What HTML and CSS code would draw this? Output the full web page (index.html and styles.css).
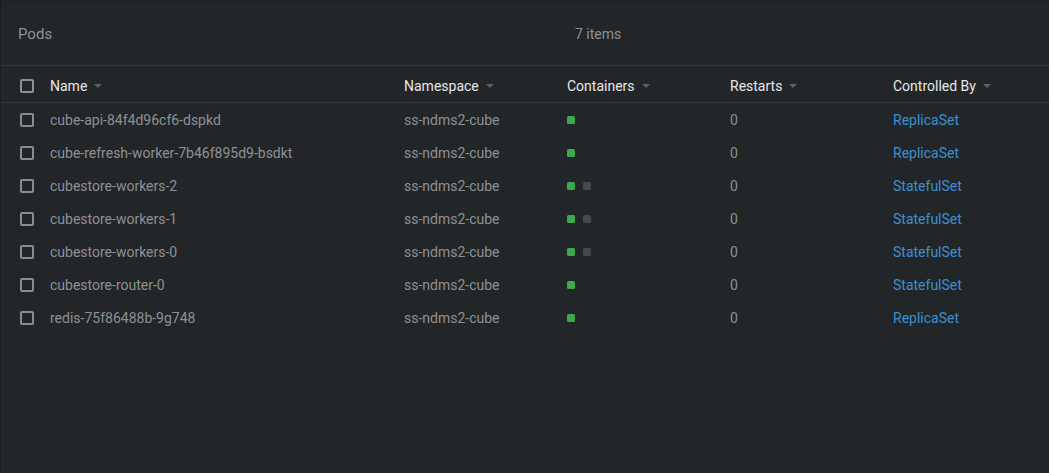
FILE: index.html
```html
<!DOCTYPE html>
<html>
<head>
<meta charset="utf-8">
<link rel="stylesheet" href="styles.css">
</head>
<body>
<div class="panel">
  <div class="title-bar">
    <div class="title">Pods</div>
    <div class="count">7 items</div>
  </div>
  <div class="table">
    <div class="row head">
      <div class="cell chk"><span class="box"></span></div>
      <div class="cell">Name<span class="sort"></span></div>
      <div class="cell">Namespace<span class="sort"></span></div>
      <div class="cell">Containers<span class="sort"></span></div>
      <div class="cell">Restarts<span class="sort"></span></div>
      <div class="cell">Controlled By<span class="sort"></span></div>
    </div>
    <div class="row">
      <div class="cell chk"><span class="box"></span></div>
      <div class="cell name">cube-api-84f4d96cf6-dspkd</div>
      <div class="cell">ss-ndms2-cube</div>
      <div class="cell"><span class="dot on"></span></div>
      <div class="cell">0</div>
      <div class="cell link">ReplicaSet</div>
    </div>
    <div class="row">
      <div class="cell chk"><span class="box"></span></div>
      <div class="cell name">cube-refresh-worker-7b46f895d9-bsdkt</div>
      <div class="cell">ss-ndms2-cube</div>
      <div class="cell"><span class="dot on"></span></div>
      <div class="cell">0</div>
      <div class="cell link">ReplicaSet</div>
    </div>
    <div class="row">
      <div class="cell chk"><span class="box"></span></div>
      <div class="cell name">cubestore-workers-2</div>
      <div class="cell">ss-ndms2-cube</div>
      <div class="cell"><span class="dot on"></span><span class="dot off"></span></div>
      <div class="cell">0</div>
      <div class="cell link">StatefulSet</div>
    </div>
    <div class="row">
      <div class="cell chk"><span class="box"></span></div>
      <div class="cell name">cubestore-workers-1</div>
      <div class="cell">ss-ndms2-cube</div>
      <div class="cell"><span class="dot on"></span><span class="dot off"></span></div>
      <div class="cell">0</div>
      <div class="cell link">StatefulSet</div>
    </div>
    <div class="row">
      <div class="cell chk"><span class="box"></span></div>
      <div class="cell name">cubestore-workers-0</div>
      <div class="cell">ss-ndms2-cube</div>
      <div class="cell"><span class="dot on"></span><span class="dot off"></span></div>
      <div class="cell">0</div>
      <div class="cell link">StatefulSet</div>
    </div>
    <div class="row">
      <div class="cell chk"><span class="box"></span></div>
      <div class="cell name">cubestore-router-0</div>
      <div class="cell">ss-ndms2-cube</div>
      <div class="cell"><span class="dot on"></span></div>
      <div class="cell">0</div>
      <div class="cell link">StatefulSet</div>
    </div>
    <div class="row">
      <div class="cell chk"><span class="box"></span></div>
      <div class="cell name">redis-75f86488b-9g748</div>
      <div class="cell">ss-ndms2-cube</div>
      <div class="cell"><span class="dot on"></span></div>
      <div class="cell">0</div>
      <div class="cell link">ReplicaSet</div>
    </div>
  </div>
</div>
</body>
</html>
```

FILE: styles.css
```css
* { box-sizing: border-box; }
html, body {
  margin: 0;
  padding: 0;
  background: #222629;
  height: 100%;
}
body {
  font-family: Roboto, "Noto Sans", sans-serif;
  font-size: 14px;
  color: #8e9194;
}
.panel {
  height: 473px;
  border-left: 1px solid #1b1e20;
  border-top: 1px solid #1e2124;
}
.title-bar {
  display: flex;
  align-items: center;
  height: 65px;
  padding-left: 17px;
  padding-top: 1px;
  border-bottom: 1px solid #33373b;
}
.title {
  font-size: 15px;
  color: #8e9397;
  width: 557px;
}
.count {
  font-size: 14px;
  color: #8e9194;
}
.row {
  display: grid;
  grid-template-columns: 31px 354px 163px 163px 163px 1fr;
  align-items: center;
  height: 33px;
  padding-left: 18px;
}
.row.head {
  height: 37px;
  padding-top: 3px;
  border-bottom: 1px solid #33373b;
  color: #e6e8ea;
}
.cell {
  display: flex;
  align-items: center;
  white-space: nowrap;
}
.box {
  display: block;
  width: 14px;
  height: 14px;
  border: 2px solid #8a8d90;
  border-radius: 2px;
  margin-left: 1px;
}
.row.head .box { border-color: #8f9295; }
.sort {
  display: inline-block;
  width: 0;
  height: 0;
  border-left: 4px solid transparent;
  border-right: 4px solid transparent;
  border-top: 4px solid #5d6166;
  margin-left: 7px;
  margin-top: 1px;
}
.dot {
  display: inline-block;
  width: 8px;
  height: 8px;
  border-radius: 1.5px;
  margin-right: 8px;
}
.dot.on { background: #3ea84c; }
.dot.off { background: #46494c; }
.link { color: #3d8fd0; }
```
